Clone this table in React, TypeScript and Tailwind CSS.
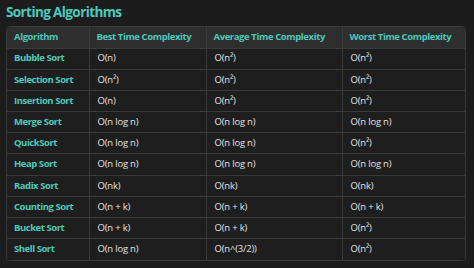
const rows: [string, string, string, string][] = [
  ["Bubble Sort", "O(n)", "O(n²)", "O(n²)"],
  ["Selection Sort", "O(n²)", "O(n²)", "O(n²)"],
  ["Insertion Sort", "O(n)", "O(n²)", "O(n²)"],
  ["Merge Sort", "O(n log n)", "O(n log n)", "O(n log n)"],
  ["QuickSort", "O(n log n)", "O(n log n)", "O(n²)"],
  ["Heap Sort", "O(n log n)", "O(n log n)", "O(n log n)"],
  ["Radix Sort", "O(nk)", "O(nk)", "O(nk)"],
  ["Counting Sort", "O(n + k)", "O(n + k)", "O(n + k)"],
  ["Bucket Sort", "O(n + k)", "O(n + k)", "O(n²)"],
  ["Shell Sort", "O(n log n)", "O(n^(3/2))", "O(n²)"],
];

const headers = [
  "Algorithm",
  "Best Time Complexity",
  "Average Time Complexity",
  "Worst Time Complexity",
];

export default function App() {
  return (
    <div className="h-[268px] w-[474px] overflow-hidden bg-[#1c1c1c] pl-[6px] font-['Open_Sans',sans-serif]">
      <h1 className="h-[26px] pt-[1px] text-[13.5px] leading-[22px] font-bold tracking-[-0.6px] text-[#4cc9bb]">
        Sorting Algorithms
      </h1>
      <div className="w-[460px] overflow-hidden rounded-[4px] border border-[#3a3a3a]">
        <table className="w-full table-fixed border-collapse text-left">
          <colgroup>
            <col className="w-[82px]" />
            <col className="w-[117px]" />
            <col className="w-[136px]" />
            <col />
          </colgroup>
          <thead>
            <tr className="h-[21px] bg-[#2e2e2e]">
              {headers.map((h, i) => (
                <th
                  key={h}
                  className={`px-[7px] text-[9.5px] font-bold tracking-[-0.4px] whitespace-nowrap text-[#4cc9bb] ${i > 0 ? "border-l border-[#3a3a3a]" : ""}`}
                >
                  {h}
                </th>
              ))}
            </tr>
          </thead>
          <tbody>
            {rows.map((r) => (
              <tr key={r[0]} className="h-[21.2px] border-t border-[#3a3a3a] bg-[#1e1e1e]">
                <td className="px-[7px] text-[9.5px] font-bold tracking-[-0.45px] whitespace-nowrap text-[#4cc9bb]">
                  {r[0]}
                </td>
                {r.slice(1).map((c, j) => (
                  <td
                    key={j}
                    className="border-l border-[#3a3a3a] px-[8px] text-[9.5px] tracking-[-0.2px] whitespace-nowrap text-[#e2e2e2]"
                  >
                    {c}
                  </td>
                ))}
              </tr>
            ))}
          </tbody>
        </table>
      </div>
    </div>
  );
}
